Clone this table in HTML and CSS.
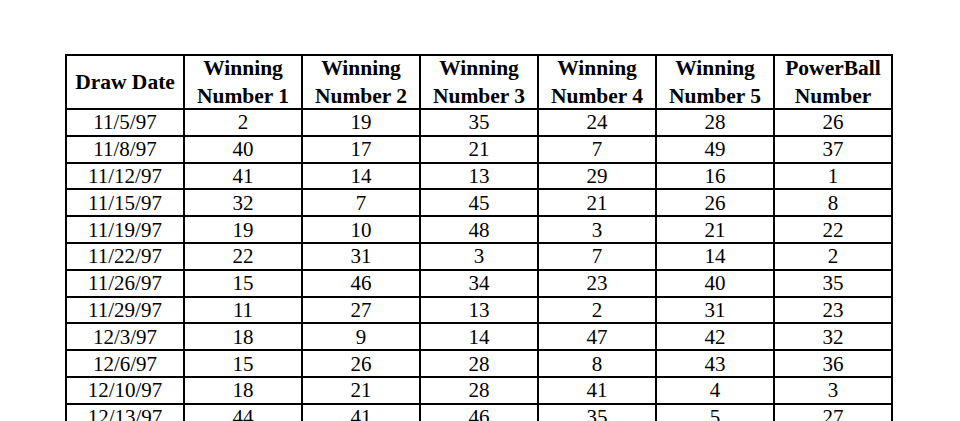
FILE: index.html
```html
<!DOCTYPE html>
<html>
<head>
<meta charset="utf-8">
<link rel="stylesheet" href="styles.css">
</head>
<body>
<div class="page">
<table class="draws">
<thead>
<tr>
<th>Draw Date</th>
<th><div class="two">Winning<br>Number 1</div></th>
<th><div class="two">Winning<br>Number 2</div></th>
<th><div class="two">Winning<br>Number 3</div></th>
<th><div class="two">Winning<br>Number 4</div></th>
<th><div class="two">Winning<br>Number 5</div></th>
<th><div class="two">PowerBall<br>Number</div></th>
</tr>
</thead>
<tbody>
<tr><td>11/5/97</td><td>2</td><td>19</td><td>35</td><td>24</td><td>28</td><td>26</td></tr>
<tr><td>11/8/97</td><td>40</td><td>17</td><td>21</td><td>7</td><td>49</td><td>37</td></tr>
<tr><td>11/12/97</td><td>41</td><td>14</td><td>13</td><td>29</td><td>16</td><td>1</td></tr>
<tr><td>11/15/97</td><td>32</td><td>7</td><td>45</td><td>21</td><td>26</td><td>8</td></tr>
<tr><td>11/19/97</td><td>19</td><td>10</td><td>48</td><td>3</td><td>21</td><td>22</td></tr>
<tr><td>11/22/97</td><td>22</td><td>31</td><td>3</td><td>7</td><td>14</td><td>2</td></tr>
<tr><td>11/26/97</td><td>15</td><td>46</td><td>34</td><td>23</td><td>40</td><td>35</td></tr>
<tr><td>11/29/97</td><td>11</td><td>27</td><td>13</td><td>2</td><td>31</td><td>23</td></tr>
<tr><td>12/3/97</td><td>18</td><td>9</td><td>14</td><td>47</td><td>42</td><td>32</td></tr>
<tr><td>12/6/97</td><td>15</td><td>26</td><td>28</td><td>8</td><td>43</td><td>36</td></tr>
<tr><td>12/10/97</td><td>18</td><td>21</td><td>28</td><td>41</td><td>4</td><td>3</td></tr>
<tr><td>12/13/97</td><td>44</td><td>41</td><td>46</td><td>35</td><td>5</td><td>27</td></tr>
</tbody>
</table>
</div>
</body>
</html>
```
FILE: styles.css
```css
html, body {
  margin: 0;
  padding: 0;
  background: #fff;
  overflow: hidden;
}
.page {
  padding: 54px 0 0 65px;
}
.draws {
  border-collapse: separate;
  border-spacing: 0;
  table-layout: fixed;
  border-left: 2px solid #000;
  border-top: 2px solid #000;
  font-family: "Liberation Serif", "Times New Roman", serif;
  font-size: 21px;
  color: #000;
}
.draws th,
.draws td {
  width: 116px;
  padding: 0;
  border-right: 2px solid #000;
  border-bottom: 2px solid #000;
  text-align: center;
  vertical-align: middle;
  white-space: nowrap;
}
.draws th {
  height: 52px;
  font-weight: bold;
  font-size: 21.5px;
  line-height: 24px;
}
.draws td {
  height: 24.8px;
  line-height: 24px;
}
.two {
  line-height: 28px;
  height: 56px;
  margin: -2px 0 -2px;
}
```
